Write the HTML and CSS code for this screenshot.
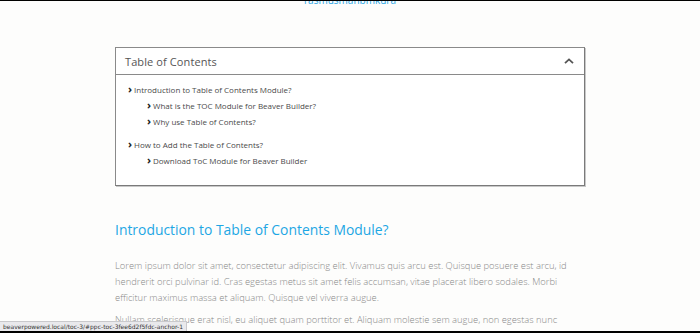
FILE: index.html
```
<!DOCTYPE html>
<html>
<head>
<meta charset="utf-8">
<link rel="stylesheet" href="styles.css">
</head>
<body>
<div class="topline"></div>
<div class="toplink"><a href="#">rasmusmanbmkura</a></div>
<main class="content">
  <section class="toc">
    <div class="toc-head">
      <span class="toc-title">Table of Contents</span>
      <svg class="toc-toggle" width="10" height="6" viewBox="0 0 10 6"><path d="M1 5.2 L5 1.4 L9 5.2" fill="none" stroke="#555" stroke-width="1.8"/></svg>
    </div>
    <div class="toc-body">
      <ul class="toc-list">
        <li class="toc-group">
          <a class="toc-item" href="#"><span class="chev">›</span>Introduction to Table of Contents Module?</a>
          <ul class="toc-sub">
            <li><a class="toc-item" href="#"><span class="chev">›</span>What is the TOC Module for Beaver Builder?</a></li>
            <li><a class="toc-item" href="#"><span class="chev">›</span>Why use Table of Contents?</a></li>
          </ul>
        </li>
        <li class="toc-group">
          <a class="toc-item" href="#"><span class="chev">›</span>How to Add the Table of Contents?</a>
          <ul class="toc-sub">
            <li><a class="toc-item" href="#"><span class="chev">›</span>Download ToC Module for Beaver Builder</a></li>
          </ul>
        </li>
      </ul>
    </div>
  </section>
  <h2 class="heading">Introduction to Table of Contents Module?</h2>
  <p class="para">Lorem ipsum dolor sit amet, consectetur adipiscing elit. Vivamus quis arcu est. Quisque posuere est arcu, id hendrerit orci pulvinar id. Cras egestas metus sit amet felis accumsan, vitae placerat libero sodales. Morbi efficitur maximus massa et aliquam. Quisque vel viverra augue.</p>
  <p class="para">Nullam scelerisque erat nisl, eu aliquet quam porttitor et. Aliquam molestie sem augue, non egestas nunc ultricies at. Suspendisse vehicula turpis eget leo sollicitudin, dapibus commodo neque facilisis.</p>
</main>
<div class="status">beaverpowered.local/toc-3/#ppc-toc-3fee6d2f5fdc-anchor-1</div>
<div class="bottomline"></div>
</body>
</html>
```
FILE: styles.css
```
html, body {
  margin: 0;
  padding: 0;
  height: 333px;
  overflow: hidden;
}
body {
  background: #fdfdfc;
  font-family: "Open Sans", "DejaVu Sans", sans-serif;
  font-weight: 300;
  position: relative;
}
.topline {
  height: 1px;
  background: #000;
}
.toplink {
  text-align: center;
  height: 4px;
  overflow: hidden;
  font-size: 10px;
  line-height: 10px;
}
.toplink a {
  display: block;
  margin-top: -6px;
  color: #2aa6e6;
  text-decoration: none;
  font-weight: 400;
}
.content {
  width: 470px;
  margin-left: 115px;
  padding-top: 42px;
}
.toc {
  border: 1px solid #8a8a8a;
  border-right-color: #7a7a7a;
  border-bottom-color: #7a7a7a;
  box-shadow: 1px 1px 0 #c8c8c8;
  height: 139px;
  box-sizing: border-box;
  background: #fff;
}
.toc-head {
  display: flex;
  align-items: center;
  justify-content: space-between;
  height: 26px;
  padding: 0 10px 0 9px;
  border-bottom: 1px solid #8a8a8a;
}
.toc-title {
  font-size: 11px;
  font-weight: 400;
  color: #555;
  letter-spacing: 0.1px;
}
.toc-body {
  padding: 7px 0 0 12px;
}
.toc-list, .toc-sub {
  list-style: none;
  margin: 0;
  padding: 0;
}
.toc-sub {
  padding-left: 19px;
}
.toc-group + .toc-group {
  margin-top: 7px;
}
.toc-item {
  display: block;
  font-size: 8px;
  font-weight: 400;
  line-height: 16px;
  color: #4a4a4a;
  text-decoration: none;
  white-space: nowrap;
}
.chev {
  display: inline-block;
  width: 6px;
  font-size: 11px;
  font-weight: bold;
  color: #222;
  line-height: 10px;
}
.heading {
  margin: 34px 0 0 0;
  font-size: 13.9px;
  line-height: 20px;
  font-weight: 400;
  color: #1ea7e4;
}
.para {
  margin: 18px 0 0 0;
  font-size: 9.4px;
  line-height: 16px;
  color: #888;
}
.para + .para {
  margin-top: 6px;
}
.status {
  position: absolute;
  left: 0;
  bottom: 2px;
  height: 9px;
  padding: 0 3px;
  background: #e9e9ec;
  border: 1px solid #c9c9cc;
  border-left: 0;
  border-bottom: 0;
  font-size: 6px;
  line-height: 9px;
  color: #333;
  font-family: "DejaVu Sans", sans-serif;
  font-weight: 400;
}
.bottomline {
  position: absolute;
  left: 0;
  right: 0;
  bottom: 0;
  height: 2px;
  background: #000;
}
```
